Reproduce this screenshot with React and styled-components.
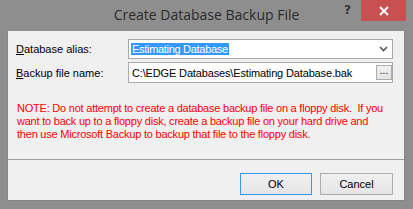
import styled, { createGlobalStyle } from 'styled-components';

const Global = createGlobalStyle`
  html, body { margin: 0; padding: 0; }
  body { width: 413px; height: 209px; overflow: hidden; background: #8e8e8e; }
`;

const Frame = styled.div`
  width: 413px;
  height: 209px;
  box-sizing: border-box;
  background: #8e8e8e;
  display: flex;
  flex-direction: column;
  padding: 0 8px 8px 7px;
`;

const TitleBar = styled.div`
  height: 31px;
  flex: none;
  display: flex;
  align-items: flex-start;
  position: relative;
  margin: 0 -8px 0 -7px;
`;

const Title = styled.div`
  position: absolute;
  left: 0;
  right: 0;
  top: 5px;
  text-align: center;
  font-family: "Open Sans", sans-serif;
  font-size: 14px;
  color: #2b2b2b;
`;

const Help = styled.div`
  position: absolute;
  left: 344px;
  top: 3px;
  font-family: "DejaVu Sans", sans-serif;
  font-weight: bold;
  font-size: 12px;
  color: #333;
`;

const Close = styled.div`
  position: absolute;
  left: 361px;
  top: 0;
  width: 45px;
  height: 21px;
  background: #c75050;
  display: flex;
  align-items: center;
  justify-content: center;
`;

const Client = styled.div`
  flex: 1;
  background: #f0f0f0;
  border: 1px solid #858585;
  border-top: none;
  display: flex;
  flex-direction: column;
  font-family: "Liberation Sans", Arial, sans-serif;
  font-size: 11px;
  color: #000;
`;

const Body = styled.div`
  padding: 8px 11px 0 8px;
  display: flex;
  flex-direction: column;
  gap: 3px;
  height: 120px;
`;

const Row = styled.div`
  display: flex;
  align-items: center;
  height: ${({ $h }) => $h}px;
`;

const Label = styled.div`
  width: 112px;
  flex: none;
  u { text-decoration: underline; }
`;

const Combo = styled.div`
  flex: 1;
  height: 100%;
  box-sizing: border-box;
  background: #fff;
  border: 1px solid #a9a9a9;
  display: flex;
  align-items: center;
  padding: 0 2px;
`;

const Selected = styled.span`
  background: #3399ff;
  color: #fff;
  line-height: 12px;
  padding: 0 1px;
  letter-spacing: -0.3px;
`;

const Chevron = styled.svg`
  margin-left: auto;
  margin-right: 2px;
`;

const TextBox = styled.div`
  flex: 1;
  height: 100%;
  box-sizing: border-box;
  background: #fff;
  border: 1px solid #a9a9a9;
  display: flex;
  align-items: center;
  padding: 0 0 0 3px;
  letter-spacing: -0.15px;
`;

const Browse = styled.div`
  margin-left: auto;
  width: 16px;
  height: 15px;
  box-sizing: border-box;
  background: linear-gradient(#f0f0f0, #e3e3e3);
  border: 1px solid #acacac;
  display: flex;
  justify-content: center;
  align-items: center;
  font-size: 10px;
  line-height: 10px;
  padding-bottom: 3px;
  letter-spacing: 0;
`;

const Note = styled.p`
  margin: 16px 0 0 1px;
  color: #ff0000;
  line-height: 13px;
  white-space: pre;
  letter-spacing: -0.22px;
`;

const Separator = styled.div`
  height: 1px;
  background: #a0a0a0;
  flex: none;
`;

const Buttons = styled.div`
  display: flex;
  justify-content: flex-end;
  gap: 8px;
  padding: 13px 11px 0 0;
`;

const Button = styled.div`
  width: ${({ $w }) => $w}px;
  height: 22px;
  box-sizing: border-box;
  border: 1px solid ${({ $default }) => ($default ? '#3399ff' : '#adadad')};
  background: linear-gradient(#f0f0f0, #e5e5e5);
  display: flex;
  align-items: center;
  justify-content: center;
`;

export default function App() {
  return (
    <>
      <Global />
      <Frame>
        <TitleBar>
          <Title>Create Database Backup File</Title>
          <Help>?</Help>
          <Close>
            <svg width="10" height="10" viewBox="0 0 10 10">
              <path d="M1 1 L9 9 M9 1 L1 9" stroke="#fff" strokeWidth="2" />
            </svg>
          </Close>
        </TitleBar>
        <Client>
          <Body>
            <Row $h={20}>
              <Label><u>D</u>atabase alias:</Label>
              <Combo>
                <Selected>Estimating Database</Selected>
                <Chevron width="9" height="6" viewBox="0 0 9 6">
                  <path d="M1 1 L4.5 4.5 L8 1" stroke="#555" strokeWidth="1.6" fill="none" />
                </Chevron>
              </Combo>
            </Row>
            <Row $h={21}>
              <Label><u>B</u>ackup file name:</Label>
              <TextBox>
                C:\EDGE Databases\Estimating Database.bak
                <Browse>...</Browse>
              </TextBox>
            </Row>
            <Note>
              {'NOTE: Do not attempt to create a database backup file on a floppy disk.  If you\nwant to back up to a floppy disk, create a backup file on your hard drive and\nthen use Microsoft Backup to backup that file to the floppy disk.'}
            </Note>
          </Body>
          <Separator />
          <Buttons>
            <Button $w={72} $default>OK</Button>
            <Button $w={73}>Cancel</Button>
          </Buttons>
        </Client>
      </Frame>
    </>
  );
}
